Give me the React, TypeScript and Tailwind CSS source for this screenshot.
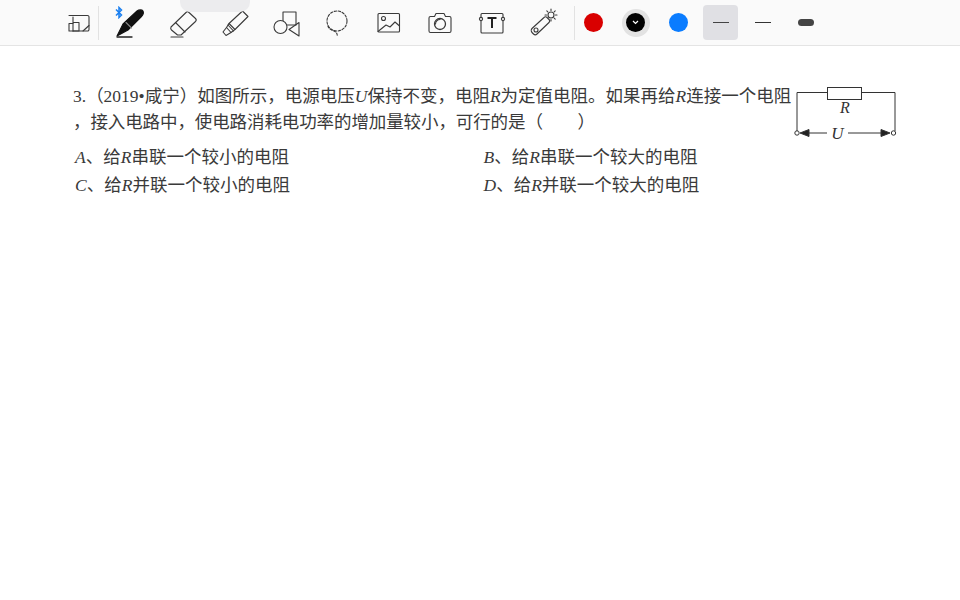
import React from 'react';

const stroke = '#3a3a3a';

function Icon({ children }: { children: React.ReactNode }) {
  return (
    <svg width="32" height="32" viewBox="0 0 32 32" fill="none" stroke={stroke} strokeWidth="1.1" strokeLinejoin="round" strokeLinecap="round">
      {children}
    </svg>
  );
}

function Slot({ className = 'w-[51.4px]', children }: { className?: string; children: React.ReactNode }) {
  return <div className={`flex h-full shrink-0 items-center justify-center ${className}`}>{children}</div>;
}

function Var({ children }: { children: React.ReactNode }) {
  return <i className="font-['Liberation_Serif',serif]">{children}</i>;
}

function Option({ letter, text, name }: { letter: string; text: string; name: string }) {
  return (
    <div className="w-[408.5px] shrink-0 whitespace-nowrap">
      <Var>{letter}</Var>、给<Var>{name}</Var>{text}
    </div>
  );
}

function Circuit() {
  return (
    <svg width="104" height="60" viewBox="0 0 104 60" fill="none" stroke="#333" strokeWidth="1">
      <path d="M4 49V10.500H34M68 10.500H102V49" />
      <rect x="34.500" y="5.500" width="34" height="12" />
      <circle cx="4" cy="51" r="2.200" />
      <circle cx="100.500" cy="51" r="2.200" />
      <path d="M12 51H34M55 51H90" />
      <path d="M7 51L16 47.500V54.500Z" fill="#222" />
      <path d="M97 51L88 47.500V54.500Z" fill="#222" />
      <text x="52" y="31" stroke="none" fill="#333" fontSize="16" fontStyle="italic" textAnchor="middle" fontFamily="'Liberation Serif', serif">R</text>
      <text x="44.500" y="56.500" stroke="none" fill="#333" fontSize="17" fontStyle="italic" textAnchor="middle" fontFamily="'Liberation Serif', serif">U</text>
    </svg>
  );
}

export default function App() {
  return (
    <div className="relative h-[600px] w-[960px] overflow-hidden bg-white font-['Liberation_Serif','Noto_Sans_CJK_SC',serif] text-[#3a3a3a]">
      {/* status pill peeking from the top */}
      <div className="absolute left-[180px] top-0 h-[12px] w-[70px] rounded-b-[10px] bg-[#ececee]" />

      <div className="flex h-[46px] items-center border-b border-[#e4e4e4] bg-[#fafafa] pl-[62px]">
        <Slot className="ml-[2px] w-[32px]">
          <Icon>
            <path d="M5 8.500H23.500A1.500 1.500 0 0 1 25 10V22.500A1.500 1.500 0 0 1 23.500 24H9" />
            <path d="M9 10V24H15V15.500H9" />
            <path d="M5 21V16.500H9M5 21V24H9" />
            <path d="M19 24L25 18.500" />
          </Icon>
        </Slot>
        <div className="ml-[2px] h-[34px] w-px bg-[#e2e2e2]" />
        <Slot className="relative ml-[5px] w-[51px]">
          <span className="absolute left-[11px] top-[6px] text-[11px] leading-none text-[#1a7ff0]">
            <svg width="8" height="13" viewBox="0 0 8 13" fill="none" stroke="#1a7ff0" strokeWidth="1.500">
              <path d="M1 3.500L6.500 9L4 11.500V1.500L6.500 4L1 9.500" />
            </svg>
          </span>
          <Icon>
            <path d="M3 29L9 17L23 4C25 2.500 28 2.500 29 4C30 6 29 8 27.500 9.500L14 23Z" fill="#111" stroke="#111" />
            <path d="M3 30H18" strokeWidth="1.300" stroke="#222" />
            <path d="M12 15.500L17.500 21" stroke="#888" />
          </Icon>
        </Slot>
        <Slot className="ml-[2.500px] w-[51.4px]">
          <Icon>
            <path d="M4 20L19 5.500C20 4.500 21 4.500 22 5.500L28.500 11.500C29.500 12.500 29.500 13.500 28.500 14.500L14 28H10.500L4.500 23C3.500 22 3.500 21 4 20Z" />
            <path d="M8.500 15.500L18 25" />
            <path d="M4 30H16" />
          </Icon>
        </Slot>
        <Slot>
          <Icon>
            <path d="M10 16.500L23.500 4L29 9.500L16 22.500Z" />
            <path d="M10 16.500L7.500 20.500L12 25.500L16 22.500" />
            <path d="M7.500 20.500L4 25L7 28.500L12 25.500" />
            <path d="M9 18L14.500 24" />
          </Icon>
        </Slot>
        <Slot>
          <Icon>
            <rect x="13" y="5" width="13" height="13" />
            <circle cx="10.500" cy="20" r="6.500" fill="#fafafa" />
            <path d="M29 15.500V29L19 22.500Z" />
          </Icon>
        </Slot>
        <Slot>
          <Icon>
            <circle cx="16" cy="14" r="10" strokeDasharray="2.400 1.600" />
            <path d="M7 19C8 23 12 23 14.500 25C16 26 16.500 27.500 16 29" strokeDasharray="2.200 1.600" />
          </Icon>
        </Slot>
        <Slot>
          <Icon>
            <rect x="5" y="6.500" width="21.500" height="18.500" rx="1" />
            <circle cx="10.500" cy="11.500" r="2" />
            <path d="M5 24.500L13 18L17 20L22 15L26.500 19" />
          </Icon>
        </Slot>
        <Slot>
          <Icon>
            <path d="M5 11C5 10 5.500 9.500 6.500 9.500H10.500L12 6.500H20L21.500 9.500H25.500C26.500 9.500 27 10 27 11V24C27 25 26.500 25.500 25.500 25.500H6.500C5.500 25.500 5 25 5 24Z" />
            <circle cx="16" cy="17" r="5.500" strokeWidth="1.300" />
            <path d="M11.500 17A4.500 4.500 0 0 1 16 12.500" />
          </Icon>
        </Slot>
        <Slot>
          <Icon>
            <path d="M5 10V7.500C5 7 5.500 6.500 6 6.500H26C26.500 6.500 27 7 27 7.500V10M27 14V25C27 25.500 26.500 26 26 26H6C5.500 26 5 25.500 5 25V14" />
            <circle cx="5" cy="12" r="1.600" />
            <circle cx="27" cy="12" r="1.600" />
            <path d="M11.500 11H20.500M16 11V21" strokeWidth="2" stroke="#222" strokeLinecap="butt" />
          </Icon>
        </Slot>
        <Slot>
          <Icon>
            <path d="M5 21.500L17 10.500C18 9.500 19 9.500 20 10.500L22 12.500C23 13.500 23 14.500 22 15.500L10 27C9 28 7.500 28 6.500 27L5 25.500C4 24.500 4 22.500 5 21.500Z" />
            <circle cx="9" cy="23" r="2" />
            <circle cx="24" cy="8" r="3" />
            <path d="M24 2V3.500M24 12.500V14M18 8H19.500M28.500 8H30M19.800 3.800L20.800 4.800M27.200 11.200L28.200 12.200M28.200 3.800L27.200 4.800" />
          </Icon>
        </Slot>
        <div className="ml-[5px] h-[34px] w-px bg-[#e2e2e2]" />
        <Slot className="ml-[1px] w-[36px]">
          <div className="h-[19px] w-[19px] rounded-full bg-[#d90000]" />
        </Slot>
        <Slot className="ml-[3px] w-[42px]">
          <div className="flex h-[28px] w-[28px] items-center justify-center rounded-full bg-[#e2e2e2]">
            <div className="flex h-[19px] w-[19px] items-center justify-center rounded-full bg-black">
              <svg width="7" height="5" viewBox="0 0 7 5" fill="none" stroke="#fff" strokeWidth="1.200">
                <path d="M1 1L3.500 3.500L6 1" />
              </svg>
            </div>
          </div>
        </Slot>
        <Slot className="ml-[1px] w-[42px]">
          <div className="h-[19px] w-[19px] rounded-full bg-[#0a7cff]" />
        </Slot>
        <Slot className="w-[42px]">
          <div className="flex h-[35px] w-[35px] items-center justify-center rounded-[4px] bg-[#e0e0e4]">
            <div className="h-px w-[16px] bg-[#444]" />
          </div>
        </Slot>
        <Slot className="w-[43px]">
          <div className="h-[1.500px] w-[16px] bg-[#333]" />
        </Slot>
        <Slot className="w-[42px]">
          <div className="h-[7px] w-[16px] rounded-full bg-[#444]" />
        </Slot>
      </div>

      <div className="pl-[73px] pt-[37px] text-[17.500px] leading-[26px]">
        <div className="flex items-start">
          <div className="w-[719px] shrink-0 whitespace-nowrap">
            <div>
              3.（2019•咸宁）如图所示，电源电压<Var>U</Var>保持不变，电阻<Var>R</Var>为定值电阻。如果再给<Var>R</Var>连接一个电阻
            </div>
            <div className="tracking-[-0.100px]">，接入电路中，使电路消耗电功率的增加量较小，可行的是（　　）</div>
          </div>
          <div className="-mt-[1px] ml-[1px] h-[52px]">
            <Circuit />
          </div>
        </div>
        <div className="mt-[8px] flex pl-[2px] leading-[28px]">
          <Option letter="A" name="R" text="串联一个较小的电阻" />
          <Option letter="B" name="R" text="串联一个较大的电阻" />
        </div>
        <div className="flex pl-[2px] leading-[28px]">
          <Option letter="C" name="R" text="并联一个较小的电阻" />
          <Option letter="D" name="R" text="并联一个较大的电阻" />
        </div>
      </div>
    </div>
  );
}
